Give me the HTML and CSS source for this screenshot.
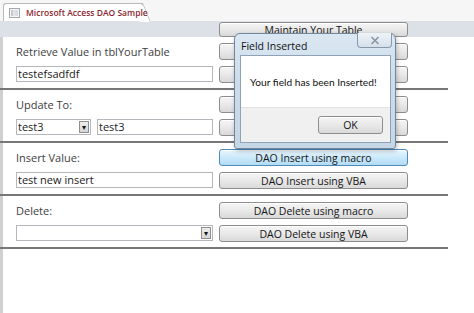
FILE: index.html
```html
<!DOCTYPE html>
<html lang="en">

<head>
    <meta charset="UTF-8">
    <title>Microsoft Access DAO Sample</title>
    <link rel="stylesheet" href="styles.css">
</head>

<body>
<div class="app">
    <div class="tabstrip">
        <div class="tab">
            <svg class="tab-icon" width="11" height="10" viewBox="0 0 11 10">
                <rect x="0.5" y="0.5" width="10" height="9" fill="#f4f6f8" stroke="#a3a8ae"/>
                <line x1="2" y1="3" x2="4.5" y2="3" stroke="#9aa0a8"/>
                <line x1="5.5" y1="3" x2="9" y2="3" stroke="#bcc2c9"/>
                <line x1="2" y1="5" x2="4.5" y2="5" stroke="#9aa0a8"/>
                <line x1="5.5" y1="5" x2="9" y2="5" stroke="#bcc2c9"/>
                <line x1="2" y1="7" x2="4.5" y2="7" stroke="#9aa0a8"/>
                <line x1="5.5" y1="7" x2="9" y2="7" stroke="#bcc2c9"/>
            </svg>
            <span>Microsoft Access DAO Sample</span>
        </div>
    </div>

    <div class="form">
        <div class="form-header">
            <button class="btn">Maintain Your Table</button>
        </div>

        <div class="group">
            <span class="caption">Retrieve Value in tblYourTable</span>
            <button class="btn">DAO Retrieve using macro</button>
            <div class="textbox">testefsadfdf</div>
            <button class="btn">DAO Retrieve using VBA</button>
        </div>

        <div class="group">
            <span class="caption">Update To:</span>
            <button class="btn">DAO Update using macro</button>
            <div class="pair">
                <div class="combo short"><span>test3</span><span class="arrow">&#9662;</span></div>
                <div class="textbox grow">test3</div>
            </div>
            <button class="btn">DAO Update using VBA</button>
        </div>

        <div class="group">
            <span class="caption">Insert Value:</span>
            <button class="btn hot">DAO Insert using macro</button>
            <div class="textbox">test new insert</div>
            <button class="btn">DAO Insert using VBA</button>
        </div>

        <div class="group">
            <span class="caption">Delete:</span>
            <button class="btn">DAO Delete using macro</button>
            <div class="combo"><span></span><span class="arrow">&#9662;</span></div>
            <button class="btn">DAO Delete using VBA</button>
        </div>
    </div>

    <div class="msgbox">
        <div class="msgbox-title">Field Inserted</div>
        <div class="msgbox-close">
            <svg width="10" height="9" viewBox="0 0 10 9">
                <path d="M1.5 1 L8.5 8 M8.5 1 L1.5 8" stroke="#8a95a3" stroke-width="1.6" fill="none"/>
            </svg>
        </div>
        <div class="msgbox-panel">
            <div class="msgbox-text">Your field has been Inserted!</div>
            <div class="msgbox-buttons">
                <button class="btn ok">OK</button>
            </div>
        </div>
    </div>
</div>
</body>
</html>
```

FILE: styles.css
```css
body {
    margin: 0;
    padding: 0;
    font-family: "Open Sans", "Liberation Sans", sans-serif;
    background-color: #fff;
}

.app {
    position: relative;
    width: 474px;
    height: 313px;
    overflow: hidden;
}

.tabstrip {
    height: 21px;
    background-color: #f6f6f6;
    display: flex;
    align-items: flex-end;
    padding-left: 3px;
}

.tab {
    position: relative;
    height: 18px;
    width: 140px;
    display: flex;
    align-items: center;
    gap: 6px;
    padding-left: 5px;
    background-color: #fff;
    border: 1px solid #b9b9b9;
    border-right: none;
    border-bottom: none;
    border-radius: 3px 0 0 0;
    box-sizing: border-box;
    white-space: nowrap;
    font-size: 8.5px;
    font-weight: 600;
    color: #8c1f2f;
}

.tab::after {
    content: "";
    position: absolute;
    top: -1px;
    right: -8px;
    width: 10px;
    height: 18px;
    background-color: #fff;
    border-top: 1px solid #b9b9b9;
    border-right: 1px solid #b9b9b9;
    border-top-right-radius: 4px;
    transform: skewX(22deg);
    transform-origin: bottom;
}

.tab-icon {
    flex-shrink: 0;
}

.tab span {
    position: relative;
    z-index: 1;
}

.form {
    background: linear-gradient(to right, #d0d0d0 3px, #fff 3px);
    height: 292px;
}

.form-header {
    height: 16px;
    background-color: #dce1e8;
    padding-left: 219px;
    display: flex;
    align-items: flex-end;
}

.form-header .btn {
    width: 189px;
    height: 15px;
}

.group {
    width: 432px;
    display: grid;
    grid-template-columns: 197px 189px;
    grid-template-rows: 17px 17px;
    column-gap: 6px;
    row-gap: 6px;
    padding: 6px 0 5px 16px;
    border-bottom: 2px solid #777;
}

.caption {
    align-self: center;
    font-size: 11px;
    color: #404040;
}

.btn {
    font-family: inherit;
    font-size: 10.5px;
    color: #151515;
    padding: 0;
    border: 1px solid #8d8d8d;
    border-radius: 3px;
    background: linear-gradient(#f5f5f5, #e9e9e9 50%, #d9d9d9);
    box-shadow: inset 0 1px 0 #fff;
}

.btn.hot {
    border-color: #4a8cc0;
    background: linear-gradient(#eaf6fd, #cbe9fa 50%, #b3dcf4);
}

.textbox, .combo {
    height: 16px;
    box-sizing: border-box;
    border: 1px solid #b4b8bd;
    background-color: #fff;
    font-size: 11px;
    color: #222;
    padding-left: 1px;
    line-height: 14px;
    display: flex;
    align-items: center;
}

.pair {
    display: flex;
    gap: 6px;
}

.combo {
    justify-content: space-between;
    padding-right: 1px;
}

.combo.short {
    width: 75px;
}

.textbox.grow {
    flex-grow: 1;
}

.arrow {
    width: 10px;
    height: 12px;
    box-sizing: border-box;
    border: 1px solid #8f8f8f;
    background: linear-gradient(#ececec, #d6d6d6);
    font-size: 8px;
    line-height: 10px;
    text-align: center;
    color: #111;
}

/* message box sits over the form */
.msgbox {
    position: absolute;
    left: 234px;
    top: 33px;
    width: 162px;
    height: 116px;
    box-sizing: border-box;
    border: 1px solid #70879e;
    border-radius: 6px 6px 3px 3px;
    background: linear-gradient(#dbe8f3, #cddcea 40%, #c5d6e6);
    box-shadow: 1px 2px 4px rgba(0, 0, 0, 0.25);
}

.msgbox-title {
    position: absolute;
    left: 6px;
    top: 5px;
    font-size: 10.5px;
    color: #111;
}

.msgbox-close {
    position: absolute;
    right: 3px;
    top: -1px;
    width: 35px;
    height: 15px;
    box-sizing: border-box;
    border: 1px solid #8798ab;
    border-top: none;
    border-radius: 0 0 4px 4px;
    background: linear-gradient(#eef3f8, #d6e0ea);
    display: flex;
    align-items: center;
    justify-content: center;
}

.msgbox-panel {
    position: absolute;
    left: 5px;
    top: 21px;
    width: 151px;
    height: 88px;
    box-sizing: border-box;
    border: 1px solid #8fa2b6;
    background-color: #fff;
    display: flex;
    flex-direction: column;
}

.msgbox-text {
    height: 51px;
    padding-left: 9px;
    display: flex;
    align-items: center;
    white-space: nowrap;
    font-family: Lato, "Open Sans", sans-serif;
    font-size: 10.2px;
    color: #111;
}

.msgbox-buttons {
    flex-grow: 1;
    background-color: #f0f0f0;
    border-top: 1px solid #e2e2e2;
    display: flex;
    align-items: center;
    justify-content: flex-end;
    padding-right: 7px;
}

.btn.ok {
    width: 65px;
    height: 18px;
}
```
